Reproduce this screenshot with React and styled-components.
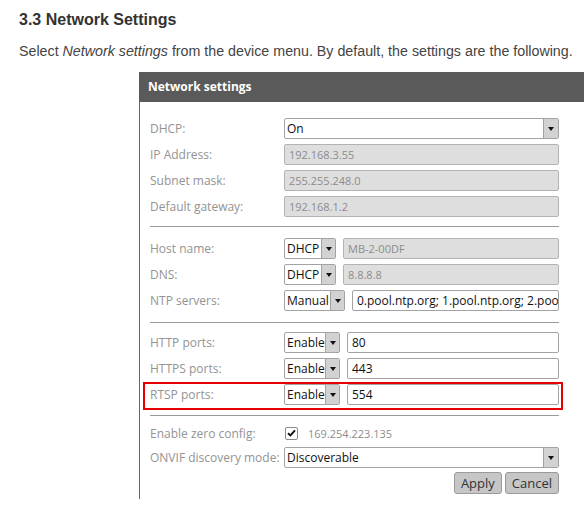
import React from 'react'
import styled, { createGlobalStyle } from 'styled-components'

const GlobalStyle = createGlobalStyle`
    body {
        margin: 0;
        background: #fff;
        font-family: "Liberation Sans", Arial, sans-serif;
    }
`

const Page = styled.div`
    width: 584px;
    height: 507px;
    overflow: hidden;
`

const Heading = styled.h3`
    margin: 0;
    padding: 11px 0 0 19px;
    font-size: 16px;
    line-height: 18px;
    font-weight: bold;
    color: #333;
`

const Intro = styled.p`
    margin: 14px 0 0;
    padding-left: 19px;
    font-size: 14.25px;
    line-height: 16px;
    color: #444;
    white-space: nowrap;

    em {
        font-style: italic;
    }
`

const Panel = styled.div`
    margin: 13px 0 0 139px;
    width: 460px;
    font-family: "Open Sans", "Noto Sans", sans-serif;
    font-size: 12px;
`

const PanelHeader = styled.div`
    height: 30px;
    line-height: 30px;
    padding-left: 9px;
    background: #5a5a5a;
    color: #fff;
    font-weight: bold;
    font-size: 12px;
`

const PanelBody = styled.div`
    border-left: 1px solid #666;
    padding: 16px 40px 5px 10px;
`

const Group = styled.div`
    display: flex;
    flex-direction: column;
    gap: ${(props) => props.$gap || 5}px;
`

const Divider = styled.div`
    height: 1px;
    background: #9a9a9a;
    margin: ${(props) => props.$top}px 0 ${(props) => props.$bottom}px;
`

const Row = styled.div`
    position: relative;
    display: grid;
    grid-template-columns: 134px 1fr;
    align-items: center;
    height: ${(props) => props.$height || 21}px;

    ${(props) => props.$marked && `
        &::after {
            content: '';
            position: absolute;
            top: -2px;
            bottom: -5px;
            left: -7px;
            right: -4px;
            border: 2px solid #e80000;
            pointer-events: none;
        }
    `}
`

const Label = styled.span`
    color: #939393;
    white-space: nowrap;
`

const Controls = styled.div`
    display: flex;
    align-items: center;
    gap: ${(props) => props.$gap || 7}px;
    height: 100%;
    min-width: 0;
`

const SelectBox = styled.div`
    display: flex;
    box-sizing: border-box;
    height: 21px;
    width: ${(props) => (props.$width ? `${props.$width}px` : '100%')};
    flex: ${(props) => (props.$width ? 'none' : '1')};
    border: 1px solid #a3a3a3;
    border-radius: 2px;
    background: #fff;
    overflow: hidden;
`

const SelectValue = styled.span`
    flex: 1;
    padding-left: 2px;
    line-height: 19px;
    color: #111;
    white-space: nowrap;
    overflow: hidden;
`

const Arrow = styled.span`
    flex: none;
    width: ${(props) => (props.$wide ? 14 : 13)}px;
    background: #d2d2d2;
    border-left: 1px solid #a3a3a3;
    display: flex;
    align-items: center;
    justify-content: center;

    &::before {
        content: '';
        border-left: 3px solid transparent;
        border-right: 3px solid transparent;
        border-top: 4px solid #111;
    }
`

const TextBox = styled.div`
    flex: 1;
    min-width: 0;
    box-sizing: border-box;
    height: 21px;
    line-height: 19px;
    padding-left: 4px;
    border: 1px solid ${(props) => (props.$disabled ? '#b3b3b3' : '#a3a3a3')};
    border-radius: 2px;
    background: ${(props) => (props.$disabled ? '#dedede' : '#fff')};
    color: ${(props) => (props.$disabled ? '#8c8c8c' : '#111')};
    font-size: ${(props) => (props.$disabled ? 11 : 12)}px;
    white-space: nowrap;
    overflow: hidden;
`

const CheckBox = styled.span`
    box-sizing: border-box;
    width: 13px;
    height: 13px;
    border: 1px solid #8a8a8a;
    border-radius: 2px;
    background: #fff;
    display: flex;
    align-items: center;
    justify-content: center;
    margin-left: 1px;
`

const HintText = styled.span`
    color: #8c8c8c;
    font-size: 11px;
    margin-left: 1px;
`

const Actions = styled.div`
    display: flex;
    justify-content: flex-end;
    gap: 3px;
    margin-top: 4px;
`

const Button = styled.button`
    height: 22px;
    padding: 0 6px;
    border: 1px solid #9a9a9a;
    border-radius: 3px;
    background: #c6c6c6;
    color: #333;
    font-family: "Open Sans", "Noto Sans", sans-serif;
    font-size: 13px;
    line-height: 20px;
`

function Select({ value, width }) {
    return (
        <SelectBox $width={width}>
            <SelectValue>{value}</SelectValue>
            <Arrow $wide={!width} />
        </SelectBox>
    )
}

const ipRows = [
    ['IP Address:', '192.168.3.55'],
    ['Subnet mask:', '255.255.248.0'],
    ['Default gateway:', '192.168.1.2'],
]

const nameRows = [
    { label: 'Host name:', mode: 'DHCP', width: 52, value: 'MB-2-00DF', disabled: true },
    { label: 'DNS:', mode: 'DHCP', width: 52, value: '8.8.8.8', disabled: true },
    { label: 'NTP servers:', mode: 'Manual', width: 61, value: '0.pool.ntp.org; 1.pool.ntp.org; 2.pool.ntp.org', gap: 7 },
]

const portRows = [
    { label: 'HTTP ports:', value: '80' },
    { label: 'HTTPS ports:', value: '443' },
    { label: 'RTSP ports:', value: '554', marked: true },
]

export default function App() {
    return (
        <Page>
            <GlobalStyle />
            <Heading>3.3 Network Settings</Heading>
            <Intro>
                Select <em>Network settings</em> from the device menu. By default, the settings are the following.
            </Intro>
            <Panel>
                <PanelHeader>Network settings</PanelHeader>
                <PanelBody>
                    <Group>
                        <Row>
                            <Label>DHCP:</Label>
                            <Controls>
                                <Select value="On" />
                            </Controls>
                        </Row>
                        {ipRows.map(([label, value]) => (
                            <Row key={label}>
                                <Label>{label}</Label>
                                <Controls>
                                    <TextBox $disabled>{value}</TextBox>
                                </Controls>
                            </Row>
                        ))}
                    </Group>
                    <Divider $top={9} $bottom={11} />
                    <Group>
                        {nameRows.map((row) => (
                            <Row key={row.label}>
                                <Label>{row.label}</Label>
                                <Controls $gap={row.gap}>
                                    <Select value={row.mode} width={row.width} />
                                    <TextBox $disabled={row.disabled}>{row.value}</TextBox>
                                </Controls>
                            </Row>
                        ))}
                    </Group>
                    <Divider $top={11} $bottom={9} />
                    <Group>
                        {portRows.map((row) => (
                            <Row key={row.label} $marked={row.marked}>
                                <Label>{row.label}</Label>
                                <Controls>
                                    <Select value="Enable" width={56} />
                                    <TextBox>{row.value}</TextBox>
                                </Controls>
                            </Row>
                        ))}
                    </Group>
                    <Divider $top={10} $bottom={8} />
                    <Group $gap={5}>
                        <Row $height={18}>
                            <Label>Enable zero config:</Label>
                            <Controls $gap={9}>
                                <CheckBox>
                                    <svg width="9" height="8" viewBox="0 0 9 8">
                                        <path d="M1 4.2 L3.4 6.5 L8 1.3" fill="none" stroke="#111" strokeWidth="1.9" />
                                    </svg>
                                </CheckBox>
                                <HintText>169.254.223.135</HintText>
                            </Controls>
                        </Row>
                        <Row>
                            <Label>ONVIF discovery mode:</Label>
                            <Controls>
                                <Select value="Discoverable" />
                            </Controls>
                        </Row>
                    </Group>
                    <Actions>
                        <Button>Apply</Button>
                        <Button>Cancel</Button>
                    </Actions>
                </PanelBody>
            </Panel>
        </Page>
    )
}
